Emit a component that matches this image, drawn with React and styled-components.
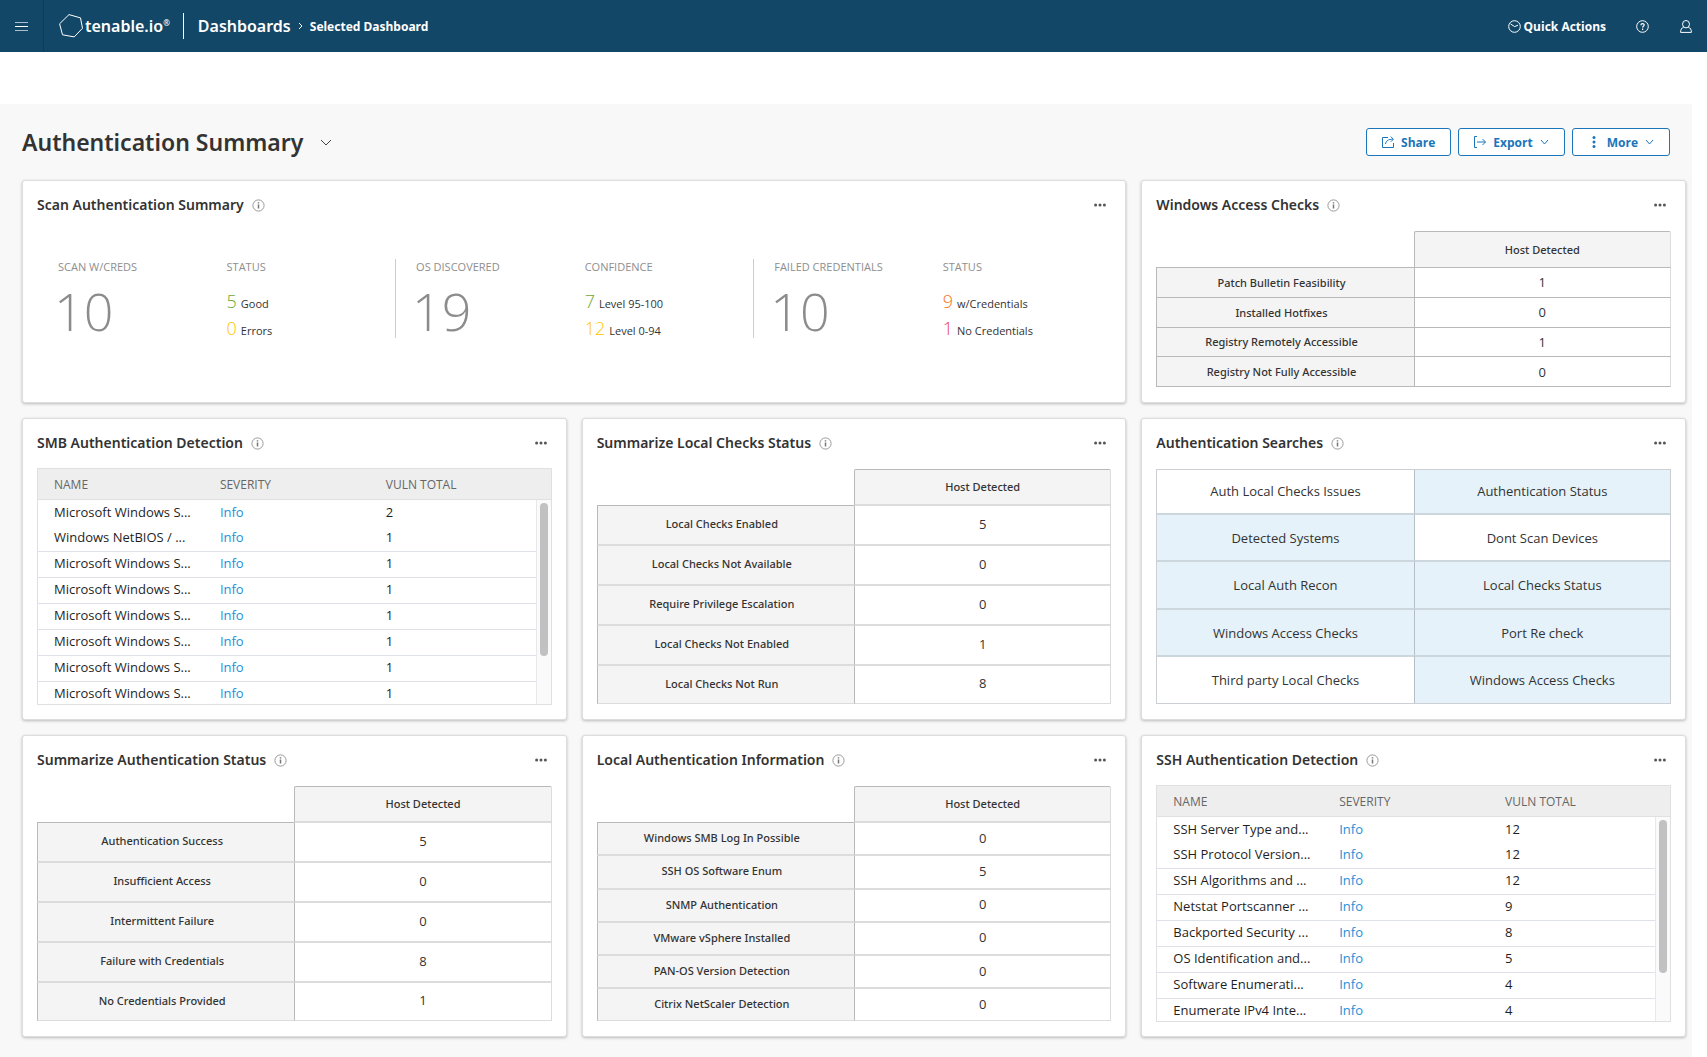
import React from "react";
import styled, { createGlobalStyle } from "styled-components";

const GlobalStyle = createGlobalStyle`
  * {
    box-sizing: border-box;
  }
  body {
    margin: 0;
    background-color: #fff;
    color: #333;
    font-family: "Open Sans", "Noto Sans", sans-serif;
    font-size: 13px;
  }
  button {
    font-family: inherit;
    cursor: pointer;
  }
`;

const Page = styled.div`
  display: flex;
  flex-direction: column;
  min-height: 100vh;
`;

const TopBar = styled.header`
  display: flex;
  align-items: center;
  height: 52px;
  background-color: #134767;
  color: #fff;
`;

const IconButton = styled.button`
  display: flex;
  align-items: center;
  justify-content: center;
  width: ${(props) => props.$width}px;
  height: ${(props) => props.$height || 52}px;
  padding: 0;
  border: 0;
  background: none;
  color: inherit;
`;

const MenuToggle = styled(IconButton)`
  border-right: 1px solid #0d3b58;
`;

const Brand = styled.a`
  display: flex;
  align-items: center;
  gap: 2px;
  height: 26px;
  margin-left: 15px;
  padding-right: 13px;
  border-right: 1px solid #fff;
  color: #fff;
  font-family: "Noto Sans", sans-serif;
  font-size: 16px;
  font-weight: 600;
  line-height: 22px;
  text-decoration: none;
  & sup {
    font-size: 8px;
    line-height: 8px;
  }
`;

const Crumbs = styled.nav`
  display: flex;
  align-items: center;
  gap: 7px;
  margin-left: 14px;
  font-family: "Noto Sans", sans-serif;
`;

const CrumbLink = styled.a`
  color: #fff;
  font-size: 16px;
  font-weight: 600;
  text-decoration: none;
`;

const CrumbCurrent = styled.span`
  font-size: 12px;
  font-weight: 700;
`;

const BarActions = styled.div`
  display: flex;
  align-items: center;
  margin-left: auto;
`;

const QuickActions = styled.button`
  display: flex;
  align-items: center;
  gap: 3px;
  margin-right: 15px;
  padding: 0;
  border: 0;
  background: none;
  color: #fff;
  font-size: 12px;
  font-weight: 700;
`;

const Main = styled.main`
  flex: 1;
  margin: 52px 15px 0 0;
  padding: 0 6px 20px 22px;
  background-color: #f8f8f8;
`;

const TitleRow = styled.div`
  display: flex;
  align-items: center;
  height: 76px;
  padding-right: 16px;
`;

const Title = styled.h1`
  margin: 0;
  color: #333;
  font-family: "Noto Sans", sans-serif;
  font-size: 23px;
  font-weight: 600;
  line-height: 32px;
`;

const Actions = styled.div`
  display: flex;
  gap: 7px;
  margin-left: auto;
`;

const ActionButton = styled.button`
  display: flex;
  align-items: center;
  justify-content: center;
  gap: 7px;
  height: 28px;
  padding: 0 15px;
  border: 1px solid #1a75bb;
  border-radius: 3px;
  background-color: #fff;
  color: #1a75bb;
  font-size: 12px;
  font-weight: 700;
`;

const Grid = styled.div`
  display: grid;
  grid-template-columns: repeat(3, minmax(0, 1fr));
  gap: 15px;
`;

const CardBox = styled.section`
  grid-column: span ${(props) => props.$span || 1};
  padding: 14px 14px 15px;
  border: 1px solid #ddd;
  border-radius: 3px;
  background-color: #fff;
  box-shadow: 0 1px 3px rgba(0, 0, 0, 0.25);
`;

const CardHead = styled.div`
  display: flex;
  align-items: center;
  gap: 8px;
  height: 20px;
  margin-bottom: 16px;
  & > :last-child {
    margin-left: auto;
  }
`;

const CardTitle = styled.h2`
  margin: 0;
  font-family: "Noto Sans", sans-serif;
  font-size: 14px;
  font-weight: 600;
  line-height: 20px;
`;

const Stats = styled.div`
  display: flex;
  margin-top: 44px;
`;

const StatGroup = styled.div`
  flex: 1;
  display: grid;
  grid-template-columns: 1fr 1fr;
  height: 79px;
  padding-left: 21px;
  & + & {
    border-left: 1px solid #ccc;
    padding-left: 20px;
  }
`;

const StatLabel = styled.div`
  color: #8e8e8e;
  font-size: 11px;
  line-height: 15px;
`;

const BigNumber = styled.div`
  margin-top: 7px;
  margin-left: -4px;
  color: #8c8c8c;
  font-size: 52px;
  font-weight: 300;
  line-height: 60px;
`;

const StatLines = styled.div`
  margin-top: 14px;
`;

const StatLine = styled.div`
  display: flex;
  align-items: baseline;
  gap: 4px;
  height: 27px;
  color: #333;
  font-size: 11px;
  line-height: 27px;
  & b {
    color: ${(props) => props.$color};
    font-size: 18px;
    font-weight: 300;
  }
`;

const MatrixTable = styled.table`
  width: 100%;
  height: ${(props) => props.$height}px;
  border-collapse: separate;
  border-spacing: 0;
  table-layout: fixed;
  color: #333;
  text-align: center;
  & th,
  & td {
    padding: ${(props) => (props.$thin ? 0 : "0 0 2px")};
    border-left: 1px solid #b9b9b9;
    border-bottom: ${(props) =>
      props.$thin ? "1px solid #b9b9b9" : "2px solid #dcdcdc"};
  }
  & th {
    background-color: #f4f4f4;
    font-family: "Noto Sans", sans-serif;
    font-size: 11px;
    font-weight: 500;
  }
  & td {
    font-size: 13px;
  }
  & tr > :last-child {
    border-right: 1px solid #dcdcdc;
  }
  & thead tr {
    height: 37px;
  }
  & thead td {
    border-left: 0;
    border-bottom: 1px solid #b9b9b9;
  }
  & thead th {
    border-top: 1px solid #b9b9b9;
    border-radius: 2px 2px 0 0;
  }
  & tbody th {
    padding-right: 8px;
  }
  & tbody tr:last-child > * {
    border-bottom: 1px solid ${(props) => (props.$thin ? "#b9b9b9" : "#dcdcdc")};
  }
`;

const SearchTable = styled.table`
  width: 100%;
  height: 235px;
  border-collapse: separate;
  border-spacing: 0;
  border: 1px solid #ccd0d4;
  table-layout: fixed;
  text-align: center;
`;

const SearchCell = styled.td`
  padding: 0;
  background-color: ${(props) => (props.$active ? "#e5f2fa" : "#fff")};
  font-size: 13px;
  & + & {
    border-left: 1px solid #b6bfc5;
  }
  tr + tr > & {
    border-top: 2px solid #ccd6dd;
  }
`;

const ListFrame = styled.div`
  position: relative;
  height: 237px;
  margin-top: -1px;
  margin-bottom: -1px;
  overflow: hidden;
  border: 1px solid #e0e0e0;
`;

const ListTable = styled.table`
  width: 100%;
  border-collapse: separate;
  border-spacing: 0;
  table-layout: fixed;
  text-align: left;
  & th,
  & td {
    padding: 0 0 0 16px;
    white-space: nowrap;
  }
  & th {
    height: 31px;
    border-bottom: 1px solid #e0e0e0;
    background-color: #eee;
    color: #666;
    font-size: 12px;
    font-weight: 400;
  }
  & td {
    height: 26px;
    padding-bottom: 3px;
    border-bottom: 1px solid #dfe1ea;
    color: #1f1f1f;
    font-size: 13px;
  }
  & tbody tr:first-child td {
    border-bottom: 0;
  }
  & a {
    color: #2491d9;
    text-decoration: none;
  }
`;

const ScrollCol = styled.col`
  width: 15px;
`;

const ScrollTrack = styled.div`
  position: absolute;
  top: 31px;
  right: 0;
  bottom: 0;
  width: 15px;
  padding: 3px;
  border-left: 1px solid #e8e8e8;
  background-color: #fafafa;
`;

const ScrollThumb = styled.div`
  height: 153px;
  border-radius: 4px;
  background-color: #c1c1c1;
`;

const Svg = ({ w, h, children, ...rest }) => (
  <svg
    width={w}
    height={h}
    viewBox={`0 0 ${w} ${h}`}
    fill="none"
    stroke="currentColor"
    aria-hidden="true"
    {...rest}
  >
    {children}
  </svg>
);

const Chevron = ({ w = 7, h = 4, ...rest }) => (
  <Svg w={w + 2} h={h + 2} {...rest}>
    <path d={`M1 1l${w / 2} ${h}l${w / 2} ${-h}`} />
  </Svg>
);

const TitleToggle = styled(IconButton)`
  margin-left: 11px;
  color: #444;
`;

const InfoIcon = () => (
  <Svg w={13} h={13} stroke="#999">
    <circle cx="6.5" cy="6.5" r="5.6" />
    <path d="M6.5 5.6v4M6.5 3.2v1.3" stroke="#777" strokeWidth="1.5" />
  </Svg>
);

const Card = ({ title, span, children }) => (
  <CardBox $span={span}>
    <CardHead>
      <CardTitle>{title}</CardTitle>
      <InfoIcon />
      <IconButton $width={22} $height={20} aria-label={`${title} options`}>
        <Svg w={12} h={4} fill="#555" stroke="none">
          <circle cx="1.6" cy="2" r="1.5" />
          <circle cx="6" cy="2" r="1.5" />
          <circle cx="10.4" cy="2" r="1.5" />
        </Svg>
      </IconButton>
    </CardHead>
    {children}
  </CardBox>
);

const Matrix = ({ rows, height = 235, thin }) => (
  <MatrixTable $height={height} $thin={thin}>
    <thead>
      <tr>
        <td></td>
        <th scope="col">Host Detected</th>
      </tr>
    </thead>
    <tbody>
      {rows.map(([label, value]) => (
        <tr key={label}>
          <th scope="row">{label}</th>
          <td>{value}</td>
        </tr>
      ))}
    </tbody>
  </MatrixTable>
);

const Findings = ({ rows }) => (
  <ListFrame>
    <ListTable>
      <colgroup>
        <col />
        <col />
        <col />
        <ScrollCol />
      </colgroup>
      <thead>
        <tr>
          <th scope="col">NAME</th>
          <th scope="col">SEVERITY</th>
          <th scope="col" colSpan={2}>
            VULN TOTAL
          </th>
        </tr>
      </thead>
      <tbody>
        {rows.map(([name, total], i) => (
          <tr key={i}>
            <td>{name}</td>
            <td>
              <a href="#info">Info</a>
            </td>
            <td colSpan={2}>{total}</td>
          </tr>
        ))}
      </tbody>
    </ListTable>
    <ScrollTrack>
      <ScrollThumb />
    </ScrollTrack>
  </ListFrame>
);

const stats = [
  {
    label: "SCAN W/CREDS",
    total: 10,
    side: "STATUS",
    lines: [
      [5, "Good", "#6fa82f"],
      [0, "Errors", "#ffc400"],
    ],
  },
  {
    label: "OS DISCOVERED",
    total: 19,
    side: "CONFIDENCE",
    lines: [
      [7, "Level 95-100", "#6fa82f"],
      [12, "Level 0-94", "#ffc400"],
    ],
  },
  {
    label: "FAILED CREDENTIALS",
    total: 10,
    side: "STATUS",
    lines: [
      [9, "w/Credentials", "#f5771e"],
      [1, "No Credentials", "#ef3b50"],
    ],
  },
];

const windowsChecks = [
  ["Patch Bulletin Feasibility", 1],
  ["Installed Hotfixes", 0],
  ["Registry Remotely Accessible", 1],
  ["Registry Not Fully Accessible", 0],
];

const smbFindings = [
  ["Microsoft Windows S...", 2],
  ["Windows NetBIOS / ...", 1],
  ["Microsoft Windows S...", 1],
  ["Microsoft Windows S...", 1],
  ["Microsoft Windows S...", 1],
  ["Microsoft Windows S...", 1],
  ["Microsoft Windows S...", 1],
  ["Microsoft Windows S...", 1],
];

const localChecks = [
  ["Local Checks Enabled", 5],
  ["Local Checks Not Available", 0],
  ["Require Privilege Escalation", 0],
  ["Local Checks Not Enabled", 1],
  ["Local Checks Not Run", 8],
];

const searches = [
  [["Auth Local Checks Issues"], ["Authentication Status", true]],
  [["Detected Systems", true], ["Dont Scan Devices"]],
  [["Local Auth Recon", true], ["Local Checks Status", true]],
  [["Windows Access Checks", true], ["Port Re check", true]],
  [["Third party Local Checks"], ["Windows Access Checks", true]],
];

const authStatus = [
  ["Authentication Success", 5],
  ["Insufficient Access", 0],
  ["Intermittent Failure", 0],
  ["Failure with Credentials", 8],
  ["No Credentials Provided", 1],
];

const localAuth = [
  ["Windows SMB Log In Possible", 0],
  ["SSH OS Software Enum", 5],
  ["SNMP Authentication", 0],
  ["VMware vSphere Installed", 0],
  ["PAN-OS Version Detection", 0],
  ["Citrix NetScaler Detection", 0],
];

const sshFindings = [
  ["SSH Server Type and...", 12],
  ["SSH Protocol Version...", 12],
  ["SSH Algorithms and ...", 12],
  ["Netstat Portscanner ...", 9],
  ["Backported Security ...", 8],
  ["OS Identification and...", 5],
  ["Software Enumerati...", 4],
  ["Enumerate IPv4 Inte...", 4],
];

export default function App() {
  return (
    <Page>
      <GlobalStyle />
      <TopBar>
        <MenuToggle $width={44} aria-label="Menu">
          <Svg w={13} h={11}>
            <path d="M0 1.5h13M0 9.5h13" stroke="#a9bfcd" />
            <path d="M0 5.5h13" />
          </Svg>
        </MenuToggle>
        <Brand href="#home">
          <Svg w={24} h={24}>
            <path d="M10 .6l11.500 3.300 2 10.400-8.300 8.600-11.700-2.100L.600 9.800z" />
          </Svg>
          <span>
            tenable.io<sup>®</sup>
          </span>
        </Brand>
        <Crumbs aria-label="Breadcrumb">
          <CrumbLink href="#dashboards">Dashboards</CrumbLink>
          <Svg w={5} h={8}>
            <path d="M1 1l3 3-3 3" />
          </Svg>
          <CrumbCurrent>Selected Dashboard</CrumbCurrent>
        </Crumbs>
        <BarActions>
          <QuickActions>
            <Svg w={13} h={13}>
              <circle cx="6.5" cy="6.5" r="5.8" />
              <path d="M2.6 4l4 2.600 3.400-1.400" />
            </Svg>
            Quick Actions
          </QuickActions>
          <IconButton $width={43} aria-label="Help">
            <Svg w={13} h={13}>
              <circle cx="6.5" cy="6.5" r="5.8" />
              <path
                d="M4.900 5.300c0-2.300 3.300-2.200 3.300-.2 0 1.200-1.600 1.200-1.600 2.500M6.600 8.600v1.300"
                strokeWidth="1.2"
              />
            </Svg>
          </IconButton>
          <IconButton $width={43} aria-label="Account">
            <Svg w={12} h={13}>
              <ellipse cx="6" cy="4.2" rx="3.5" ry="3.7" />
              <path d="M3.700 7.200C1.500 8 .6 9.500.6 12.400h10.800c0-2.900-.9-4.400-3.100-5.200" />
            </Svg>
          </IconButton>
        </BarActions>
      </TopBar>
      <Main>
        <TitleRow>
          <Title>Authentication Summary</Title>
          <TitleToggle $width={24} $height={24} aria-label="Switch dashboard">
            <Chevron w={10} h={5} />
          </TitleToggle>
          <Actions>
            <ActionButton>
              <Svg w={12} h={12}>
                <path d="M6 1.500H.500v10h11V7" />
                <path d="M3.500 8c.5-3.200 2.700-4.800 7.500-4.800M8.800.600l2.600 2.600-2.600 2.600" />
              </Svg>
              Share
            </ActionButton>
            <ActionButton>
              <Svg w={12} h={12}>
                <path d="M3 .5H.5v11H3M3 6h8.400M8.500 3l3 3-3 3" />
              </Svg>
              Export
              <Chevron />
            </ActionButton>
            <ActionButton>
              <Svg w={12} h={12} fill="currentColor" stroke="none">
                <circle cx="6" cy="1.5" r="1.5" />
                <circle cx="6" cy="6" r="1.5" />
                <circle cx="6" cy="10.5" r="1.5" />
              </Svg>
              More
              <Chevron />
            </ActionButton>
          </Actions>
        </TitleRow>
        <Grid>
          <Card title="Scan Authentication Summary" span={2}>
            <Stats>
              {stats.map((group) => (
                <StatGroup key={group.label}>
                  <div>
                    <StatLabel>{group.label}</StatLabel>
                    <BigNumber>{group.total}</BigNumber>
                  </div>
                  <div>
                    <StatLabel>{group.side}</StatLabel>
                    <StatLines>
                      {group.lines.map(([count, text, color]) => (
                        <StatLine key={text} $color={color}>
                          <b>{count}</b>
                          {text}
                        </StatLine>
                      ))}
                    </StatLines>
                  </div>
                </StatGroup>
              ))}
            </Stats>
          </Card>
          <Card title="Windows Access Checks">
            <Matrix rows={windowsChecks} height={156} thin />
          </Card>
          <Card title="SMB Authentication Detection">
            <Findings rows={smbFindings} />
          </Card>
          <Card title="Summarize Local Checks Status">
            <Matrix rows={localChecks} />
          </Card>
          <Card title="Authentication Searches">
            <SearchTable>
              <tbody>
                {searches.map((row, i) => (
                  <tr key={i}>
                    {row.map(([text, active]) => (
                      <SearchCell key={text} $active={active}>
                        {text}
                      </SearchCell>
                    ))}
                  </tr>
                ))}
              </tbody>
            </SearchTable>
          </Card>
          <Card title="Summarize Authentication Status">
            <Matrix rows={authStatus} />
          </Card>
          <Card title="Local Authentication Information">
            <Matrix rows={localAuth} />
          </Card>
          <Card title="SSH Authentication Detection">
            <Findings rows={sshFindings} />
          </Card>
        </Grid>
      </Main>
    </Page>
  );
}
